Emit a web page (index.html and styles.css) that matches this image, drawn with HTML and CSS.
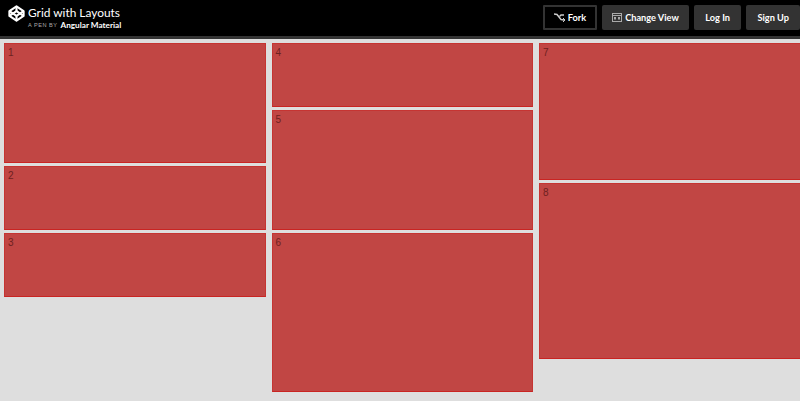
FILE: index.html
```html
<!DOCTYPE html>
<html lang="en">
<head>
    <meta charset="UTF-8">
    <title>Grid with Layouts</title>
    <link rel="stylesheet" href="styles.css">
</head>
<body>
    <header class="top-bar">
        <div class="pen-info">
            <svg class="logo" width="17" height="17" viewBox="0 0 24 24" fill="none" stroke="#fff" stroke-width="3" stroke-linejoin="round">
                <polygon points="12 2 22 8.6 22 15.4 12 22 2 15.4 2 8.6"></polygon>
                <polyline points="2 8.6 12 15.4 22 8.6"></polyline>
                <polyline points="2 15.4 12 8.6 22 15.4"></polyline>
                <line x1="12" y1="2" x2="12" y2="8.6"></line>
                <line x1="12" y1="15.4" x2="12" y2="22"></line>
            </svg>
            <div class="pen-text">
                <div class="pen-title">Grid with Layouts</div>
                <div class="pen-author"><span class="pen-by">A PEN BY</span><span class="pen-name">Angular Material</span></div>
            </div>
        </div>
        <div class="actions">
            <button class="btn btn-fork">
                <svg width="11" height="9" viewBox="0 0 11 9" fill="none" stroke="#ccc" stroke-width="1.4">
                    <path d="M0 1 L3 1.5 L7 6.5 L10 7"></path>
                    <path d="M5.5 3.5 L7 2 L10 2"></path>
                    <path d="M9 5 L11 7 L9 9" stroke-width="1"></path>
                </svg>
                Fork
            </button>
            <button class="btn btn-view">
                <svg width="10" height="9" viewBox="0 0 10 9" fill="none" stroke="#aaa" stroke-width="1">
                    <rect x="0.5" y="0.5" width="9" height="8"></rect>
                    <line x1="0.5" y1="2.5" x2="9.5" y2="2.5"></line>
                    <rect x="2" y="4" width="2" height="2.5" fill="#aaa" stroke="none"></rect>
                    <rect x="6" y="4" width="2" height="2.5" fill="#aaa" stroke="none"></rect>
                </svg>
                Change View
            </button>
            <button class="btn btn-login">Log In</button>
            <button class="btn btn-signup">Sign Up</button>
        </div>
    </header>

    <main class="grid">
        <div class="column">
            <div class="tile tall">1</div>
            <div class="tile short">2</div>
            <div class="tile short">3</div>
        </div>
        <div class="column">
            <div class="tile short">4</div>
            <div class="tile tall">5</div>
            <div class="tile huge">6</div>
        </div>
        <div class="column">
            <div class="tile large">7</div>
            <div class="tile giant">8</div>
        </div>
    </main>
</body>
</html>
```

FILE: styles.css
```css
* {
    margin: 0;
    padding: 0;
    box-sizing: border-box;
}

html, body {
    height: 100%;
    overflow: hidden;
    background-color: #dedede;
    font-family: "Liberation Sans", Arial, sans-serif;
}

.top-bar {
    display: flex;
    justify-content: space-between;
    align-items: center;
    height: 39px;
    padding: 0 0 1px 8px;
    background-color: #000;
    border-bottom: 3px solid #343434;
}

.pen-info {
    display: flex;
    align-items: center;
    gap: 3px;
}

.logo {
    margin-bottom: 8px;
}

.pen-title {
    color: #fff;
    font-family: "Lato", sans-serif;
    font-size: 11.9px;
    line-height: 14px;
}

.pen-author {
    display: flex;
    align-items: center;
    gap: 3px;
    line-height: 10px;
}

.pen-by {
    color: #aaa;
    font-size: 5.6px;
    letter-spacing: 0.5px;
}

.pen-name {
    color: #fff;
    font-family: "Lato", sans-serif;
    font-size: 8.2px;
    font-weight: 700;
}

.actions {
    display: flex;
    gap: 5px;
}

.btn {
    display: flex;
    align-items: center;
    height: 25px;
    padding: 0 10px;
    border: none;
    border-radius: 2px;
    background-color: #333;
    color: #fff;
    font-family: "Lato", sans-serif;
    font-size: 9.2px;
    font-weight: 700;
}

.btn-fork {
    gap: 3px;
    padding: 0 8.5px;
    background-color: #000;
    border: 2px solid #333;
    border-radius: 1px;
}

.btn-view {
    gap: 3.5px;
}

.btn-login {
    padding: 0 11.5px;
}

.btn-signup {
    padding: 0 11px;
}

.grid {
    display: flex;
    gap: 6px;
    padding: 4px 0 0 4px;
}

.column {
    display: flex;
    flex-direction: column;
    gap: 3px;
    width: 261.5px;
    flex-shrink: 0;
}

.tile {
    padding: 3px;
    background-color: #c14644;
    border: 1px solid #c63432;
    border-bottom-color: #c92422;
    color: #6e2120;
    font-size: 10px;
    line-height: 12px;
}

.short { height: 64px; }
.tall { height: 120px; }
.huge { height: 159px; }
.large { height: 137px; }
.giant { height: 176px; }
```
